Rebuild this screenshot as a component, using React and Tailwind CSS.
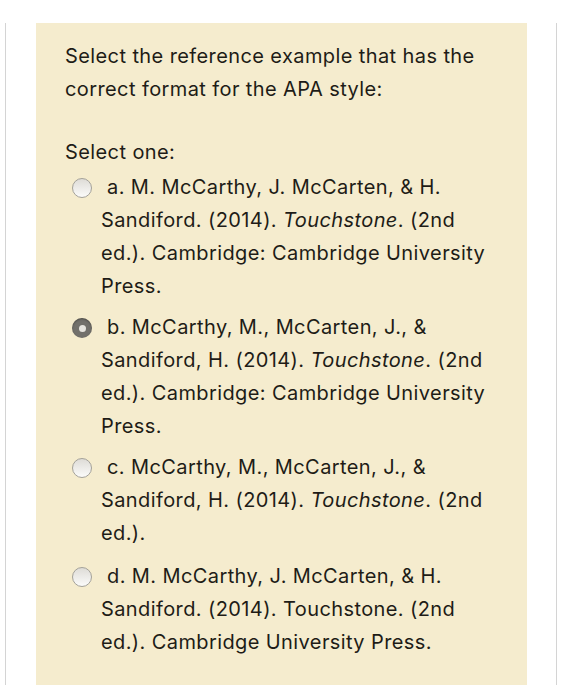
import { Fragment } from 'react'

const options = [
  {
    id: 'a',
    lines: [
      ['a. M. McCarthy, J. McCarten, & H.'],
      ['Sandiford. (2014). ', <i key="t">Touchstone</i>, '. (2nd'],
      ['ed.). Cambridge: Cambridge University'],
      ['Press.'],
    ],
  },
  {
    id: 'b',
    checked: true,
    lines: [
      ['b. McCarthy, M., McCarten, J., &'],
      ['Sandiford, H. (2014). ', <i key="t">Touchstone</i>, '. (2nd'],
      ['ed.). Cambridge: Cambridge University'],
      ['Press.'],
    ],
  },
  {
    id: 'c',
    lines: [
      ['c. McCarthy, M., McCarten, J., &'],
      ['Sandiford, H. (2014). ', <i key="t">Touchstone</i>, '. (2nd'],
      ['ed.).'],
    ],
  },
  {
    id: 'd',
    lines: [
      ['d. M. McCarthy, J. McCarten, & H.'],
      ['Sandiford. (2014). Touchstone. (2nd'],
      ['ed.). Cambridge University Press.'],
    ],
  },
]

function Radio({ checked }) {
  if (checked) {
    return (
      <div className="w-[20px] h-[20px] rounded-full bg-[#72706b] flex items-center justify-center shadow-[inset_0_1px_2px_rgba(0,0,0,0.35)]">
        <div className="w-[7px] h-[7px] rounded-full bg-[#e6e4de]" />
      </div>
    )
  }
  return (
    <div className="w-[20px] h-[20px] rounded-full border border-[#a3a19a] bg-gradient-to-b from-[#dedcd7] to-[#fbfbfa]" />
  )
}

export default function App() {
  return (
    <div className="min-h-[700px] bg-white pt-[23px] pb-[15px]" style={{ fontFamily: 'Inter, "Noto Sans", sans-serif' }}>
      <div className="mx-[5px] border-x border-[#d4d4d4] h-full">
        <div className="ml-[30px] w-[491px] bg-[#f5ecce] pl-[29px] pt-[17px] pb-[26px] text-[20px] leading-[33px] tracking-[0.4px] text-[#1e1c17]">
          <p>
            Select the reference example that has the
            <br />
            correct format for the APA style:
          </p>
          <p className="mt-[30px]">Select one:</p>
          <div className="mt-[2px] flex flex-col gap-[8px]">
            {options.map((opt) => (
              <div key={opt.id} className={`flex items-start ${opt.id === 'd' ? 'mt-[2px]' : ''}`}>
                <div className="ml-[7px] mt-[7px] shrink-0">
                  <Radio checked={opt.checked} />
                </div>
                <div className="ml-[9px] whitespace-nowrap">
                  {opt.lines.map((line, i) => (
                    <Fragment key={i}>
                      {i > 0 && <br />}
                      {i === 0 && <span className="inline-block w-[6px]" />}
                      {line}
                    </Fragment>
                  ))}
                </div>
              </div>
            ))}
          </div>
        </div>
      </div>
    </div>
  )
}
